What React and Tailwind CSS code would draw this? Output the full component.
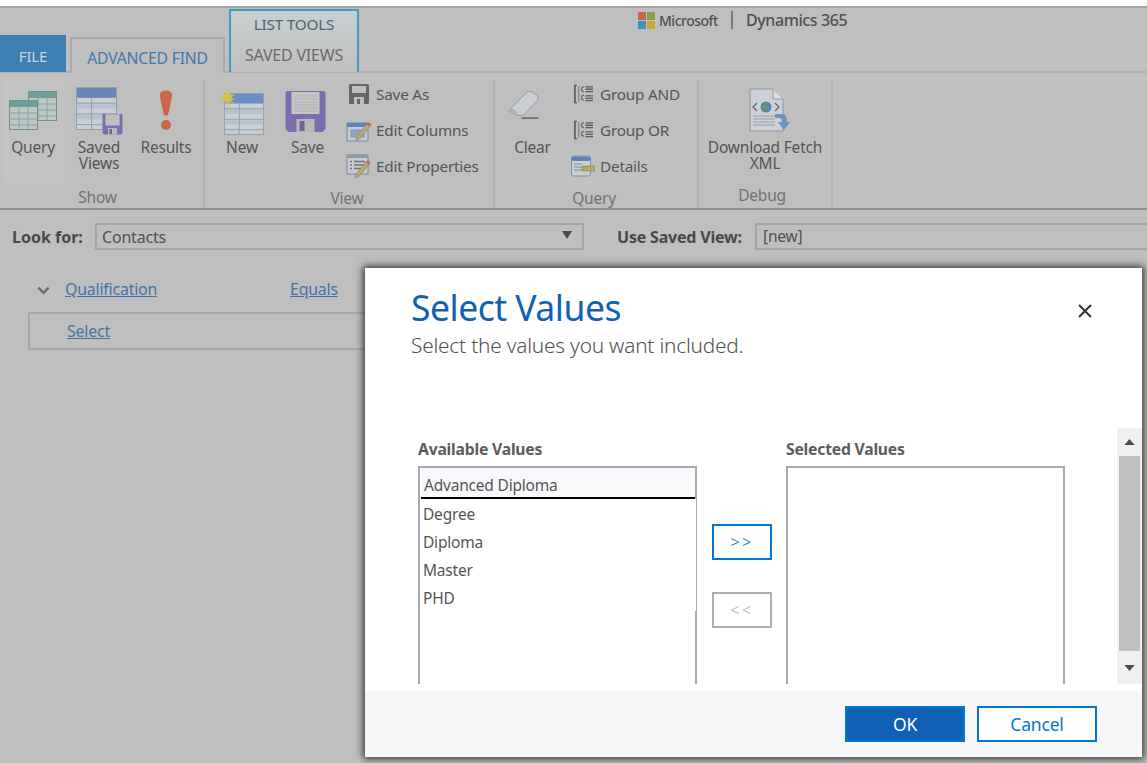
function TableIcon({ head = "#6d8fc4", line = "#8fa0ad", body = "#c9cfd3", className = "" }) {
  return (
    <svg viewBox="0 0 42 44" className={className}>
      <rect x="0.5" y="0.5" width="41" height="43" fill={body} stroke={line} />
      <rect x="1" y="1" width="40" height="10" fill={head} />
      <rect x="1" y="17" width="40" height="5" fill="#b8c2ca" />
      <rect x="1" y="28" width="40" height="5" fill="#b8c2ca" />
      <path d="M16 11v32M1 16.5h40M1 27.5h40M1 38.5h40" stroke={line} strokeWidth="1" fill="none" />
    </svg>
  );
}

function QueryIcon() {
  const grid = (x, y) => (
    <g key={x}>
      <rect x={x + 0.5} y={y + 0.5} width="28" height="29" fill="#bfc7c5" stroke="#71908f" />
      <rect x={x + 1} y={y + 1} width="27" height="6" fill="#6f9d9b" />
      <path d={`M${x + 10} ${y + 7}v22M${x + 19} ${y + 7}v22M${x} ${y + 13}h28M${x} ${y + 19}h28M${x} ${y + 25}h28`} stroke="#86a3a2" fill="none" />
    </g>
  );
  return (
    <svg viewBox="0 0 48 40" className="w-[48px] h-[40px]">
      {grid(19, 0)}
      {grid(0, 9)}
    </svg>
  );
}

function Floppy({ className = "" }) {
  return (
    <svg viewBox="0 0 40 42" className={className}>
      <path d="M0 2a2 2 0 0 1 2-2h36a2 2 0 0 1 2 2v36l-3 3H3l-3-3z" fill="#7c6eae" />
      <rect x="6" y="1" width="28" height="22" fill="#c6c6c6" />
      <path d="M8 5h24M8 8h24M8 11h24M8 14h24M8 17h24M8 20h24" stroke="#b0b0b0" />
      <rect x="11" y="28" width="18" height="13" fill="#b9b9b9" />
      <rect x="14" y="30" width="5" height="10" fill="#6f6398" />
    </svg>
  );
}

function SavedViewsIcon() {
  return (
    <div className="relative w-[48px] h-[48px]">
      <TableIcon className="w-[43px] h-[43px]" head="#6785ba" />
      <Floppy className="absolute right-0 bottom-0 w-[21px] h-[21px]" />
    </div>
  );
}

function ResultsIcon() {
  return (
    <svg viewBox="0 0 16 42" className="w-[16px] h-[42px]">
      <path d="M2 4.5C2 2 5 0.5 8 0.5s6 1.5 6 4c0 5-3 15-4 21H6C5 19.5 2 9.5 2 4.5z" fill="#c9694a" />
      <ellipse cx="8" cy="35" rx="5" ry="5" fill="#c9694a" />
    </svg>
  );
}

function NewIcon() {
  return (
    <div className="relative w-[46px] h-[46px] mt-[2px]">
      <TableIcon className="absolute right-0 bottom-0 w-[42px] h-[42px]" />
      <svg viewBox="0 0 18 18" className="absolute left-0 top-0 w-[17px] h-[17px]">
        <path d="M9 0l1.4 5L14 1.5 12 6l5-.5-4 3.500 5 2-5 .5 3 4-4.500-2.500L11 18l-2.500-4.500L6 17l.5-5L1 14l4-3.500L0 8l5.500-.5L3 3l4 2.500z" fill="#d6c05a" />
      </svg>
    </div>
  );
}

function SaveAsIcon() {
  return (
    <svg viewBox="0 0 22 22" className="w-[22px] h-[22px]">
      <path d="M1 2.500A1.500 1.500 0 0 1 2.500 1h17A1.500 1.500 0 0 1 21 2.500v17a1.500 1.500 0 0 1-1.500 1.500h-17A1.500 1.500 0 0 1 1 19.500z" fill="#666" />
      <rect x="4" y="3" width="14" height="7" fill="#bfbfbf" />
      <rect x="6" y="14" width="10" height="7" fill="#bfbfbf" />
      <rect x="9" y="16" width="3" height="5" fill="#666" />
    </svg>
  );
}

function Pencil() {
  return (
    <g>
      <path d="M11 17l10-12 3 2.500-10 12-4 1.500z" fill="#bfa66b" stroke="#8b7c58" strokeWidth="0.6" />
      <path d="M21 5l1.500-2 3 2.500-1.500 2z" fill="#c1694f" />
    </g>
  );
}

function EditColumnsIcon() {
  return (
    <svg viewBox="0 0 26 23" className="w-[26px] h-[23px]">
      <rect x="1" y="4" width="21" height="18" fill="#c3cad4" stroke="#7d8a99" />
      <rect x="1" y="4" width="21" height="4" fill="#5c82bd" />
      <rect x="5" y="11" width="13" height="7" fill="#8ea6c4" stroke="#6f86a3" strokeWidth="0.6" />
      <Pencil />
    </svg>
  );
}

function EditPropertiesIcon() {
  return (
    <svg viewBox="0 0 26 24" className="w-[26px] h-[24px]">
      <rect x="1" y="1" width="21" height="19" fill="#c8ccd1" stroke="#7f8893" />
      <rect x="1" y="1" width="21" height="3" fill="#8f9aa8" />
      <path d="M4 7.500h2M8 7.500h11M4 11h2M8 11h11M4 14.500h2M8 14.500h8" stroke="#6b7480" strokeWidth="1.300" />
      <g transform="translate(-1 3)"><Pencil /></g>
    </svg>
  );
}

function EraserIcon() {
  return (
    <svg viewBox="0 0 34 30" className="w-[33px] h-[28px] mb-[13px] mr-[19px]">
      <path d="M1 21L20 2c2-2 5-2 7-.5l4 3c2 2 2 4.500 0 6.500L17 26H9z" fill="#c9ced3" stroke="#8d98a2" strokeWidth="1" />
      <path d="M1 21l8 5 2-3-7-5z" fill="#aab4bd" />
      <path d="M15 29h18" stroke="#5b5b5b" strokeWidth="1.500" />
    </svg>
  );
}

function GroupIcon() {
  return (
    <svg viewBox="0 0 22 20" className="w-[21px] h-[20px]">
      <path d="M4 1H2v18h2" fill="none" stroke="#5d6873" strokeWidth="2" />
      <path d="M6 2v16" stroke="#7d8e9e" strokeWidth="1.500" />
      <path d="M11.500 2.500c-2-.3-2.500 1-2.500 2.500s.5 2.500 2.500 2.500M11.500 11.500c-2-.3-2.500 1-2.500 2.500s.5 2.500 2.500 2.500" fill="none" stroke="#5d6873" strokeWidth="1.300" />
      <path d="M13 2.500h8M13 5h8M13 7.500h8M13 12h8M13 14.500h8M13 17h8" stroke="#5a5a5a" strokeWidth="1.400" />
    </svg>
  );
}

function DetailsIcon() {
  return (
    <svg viewBox="0 0 24 22" className="w-[24px] h-[22px]">
      <rect x="0.500" y="1" width="19" height="20" rx="2" fill="#c9d0d8" stroke="#7f8fa3" />
      <rect x="1" y="1.500" width="18" height="4.500" rx="1.500" fill="#5f81b8" />
      <path d="M3 9h8M3 12h8M3 15h8" stroke="#7d8ea3" />
      <rect x="11" y="11" width="13" height="5" fill="#b8a65e" stroke="#8c8350" strokeWidth="0.600" />
    </svg>
  );
}

function XmlIcon() {
  return (
    <svg viewBox="0 0 42 46" className="w-[42px] h-[46px] ml-[9px]">
      <path d="M1 1h23l10 10v32H1z" fill="#cdd1d6" stroke="#8a96a5" />
      <path d="M24 1v10h10" fill="#dcdfe2" stroke="#8a96a5" />
      <circle cx="17" cy="19" r="5.500" fill="#4f86b5" />
      <path d="M14 17c2-2 3 0 4 1s2 3 0 4-3-1-4-2z" fill="#6f9a4a" />
      <path d="M8 15l-4 4 4 4M26 15l4 4-4 4" fill="none" stroke="#5e6670" strokeWidth="1.300" />
      <path d="M4 28h22M4 31h22M4 34h22M4 37h22" stroke="#8c9bad" />
      <path d="M26 26h6c5 0 6 3 6 8h3l-6 8-6-8h4c0-3-1-4-4-4h-3z" fill="#6f92c6" />
    </svg>
  );
}

function LargeBtn({ icon, label, className = "" }) {
  return (
    <div className={`flex flex-col items-center pt-[7px] ${className}`}>
      <div className="flex items-center justify-center h-[48px]">{icon}</div>
      <div className="mt-[4px] text-center text-[15.500px] leading-[16px] text-[#555555]">{label}</div>
    </div>
  );
}

function SmallBtn({ icon, label, className = "" }) {
  return (
    <div className={`flex items-center h-[36px] ${className}`}>
      <div className="flex w-[26px] justify-center">{icon}</div>
      <span className="ml-[4px] text-[15.300px] text-[#555555]">{label}</span>
    </div>
  );
}

function Group({ width, label, labelPad = "pr-[4px]", children }) {
  return (
    <div className={`flex flex-col shrink-0 border-r-2 border-[#b3b3b3] ${width}`}>
      <div className="flex h-[109px]">{children}</div>
      <div className={`flex-1 pt-[1px] text-center text-[15.500px] leading-[26px] text-[#727272] ${labelPad}`}>{label}</div>
    </div>
  );
}

function Listbox({ children }) {
  return (
    <div className="w-[279px] h-[218px] border-2 border-b-0 border-[#a6aab3] bg-white">{children}</div>
  );
}

function Chevron() {
  return (
    <svg viewBox="0 0 14 9" className="w-[13px] h-[9px]">
      <path d="M1.500 1.500L7 7l5.500-5.500" fill="none" stroke="#6a6a6a" strokeWidth="2.600" />
    </svg>
  );
}

export default function App() {
  return (
    <div className="relative w-[1147px] h-[763px] overflow-hidden bg-white font-['Noto_Sans',sans-serif] tracking-[-0.2px]">
      <div className="h-[6px] bg-white" />
      <div className="h-[757px] bg-[#bfbfbf] border-t-2 border-[#a6a6a6]">
        {/* tab bar */}
        <div className="relative flex items-end h-[65px] border-b-2 border-[#adadad]">
          <div className="w-[66px] h-[37px] mb-[-1px] pt-[5px] bg-[#3d7fb0] flex items-center justify-center text-[15px] text-[#c4d6e4]">FILE</div>
          <div className="ml-[4px] w-[155px] h-[36px] mb-[-2px] pt-[5px] bg-[#bfbfbf] border-2 border-b-0 border-[#a9a9a9] flex items-center justify-center text-[15.700px] text-[#3f78ab]">ADVANCED FIND</div>
          <div className="ml-[4px] w-[130px] h-[63px] mb-[-1px] border-2 border-b-0 border-[#419cc4] bg-gradient-to-b from-[#c9d0d2] to-[#bfbfbf] flex flex-col items-center">
            <div className="h-[26px] leading-[26px] text-[15.300px] text-[#4f6474]">LIST TOOLS</div>
            <div className="h-[34px] leading-[36px] text-[16px] text-[#6a6a6a]">SAVED VIEWS</div>
          </div>
          <div className="absolute left-[638px] top-0 flex items-center">
            <div className="grid grid-cols-2 gap-[1px] w-[17px] h-[17px]">
              <div className="bg-[#c0694f]" />
              <div className="bg-[#8aa03f]" />
              <div className="bg-[#3f93bd]" />
              <div className="bg-[#c9a63e]" />
            </div>
            <span className="ml-[4px] text-[14px] font-medium tracking-[-0.5px] text-[#505050]">Microsoft</span>
            <div className="ml-[13px] w-[2px] h-[18px] bg-[#7b7b7b]" />
            <span className="ml-[13px] text-[16px] font-medium tracking-[-0.4px] text-[#505050]">Dynamics 365</span>
          </div>
        </div>

        {/* ribbon */}
        <div className="flex h-[137px] pt-[7px] border-b-2 border-[#8f8f8f]">
          <Group width="w-[205px]" label="Show" labelPad="pr-[8px]">
            <LargeBtn className="w-[62px] ml-[2px] bg-[#c2c2c2] h-[103px]" icon={<QueryIcon />} label="Query" />
            <LargeBtn className="w-[70px]" icon={<SavedViewsIcon />} label={<>Saved<br />Views</>} />
            <LargeBtn className="w-[64px]" icon={<ResultsIcon />} label="Results" />
          </Group>
          <Group width="w-[290px]" label="View">
            <LargeBtn className="w-[74px]" icon={<NewIcon />} label="New" />
            <LargeBtn className="w-[57px]" icon={<Floppy className="w-[41px] h-[42px] mt-[2px] mr-[4px]" />} label="Save" />
            <div className="flex flex-col ml-[10px] -mt-[4px]">
              <SmallBtn icon={<SaveAsIcon />} label="Save As" />
              <SmallBtn icon={<EditColumnsIcon />} label="Edit Columns" />
              <SmallBtn icon={<EditPropertiesIcon />} label="Edit Properties" />
            </div>
          </Group>
          <Group width="w-[204px]" label="Query">
            <LargeBtn className="w-[75px]" icon={<EraserIcon />} label="Clear" />
            <div className="flex flex-col -mt-[4px]">
              <SmallBtn icon={<GroupIcon />} label="Group AND" />
              <SmallBtn icon={<GroupIcon />} label="Group OR" />
              <SmallBtn className="w-[89px] -ml-[3px] pl-[3px] bg-[#c1c1c1]" icon={<DetailsIcon />} label="Details" />
            </div>
          </Group>
          <Group width="w-[134px]" label="Debug" labelPad="pr-[6px]">
            <LargeBtn className="w-[132px]" icon={<XmlIcon />} label={<>Download Fetch<br />XML</>} />
          </Group>
        </div>

        {/* look for */}
        <div className="flex items-center h-[27px] mt-[13px] pl-[12px]">
          <span className="w-[83px] pt-[1px] text-[16px] tracking-normal font-bold text-[#484848]">Look for:</span>
          <div className="flex items-center justify-between w-[489px] h-[27px] border-2 border-[#a5a5a5] pl-[5px] pr-[10px]">
            <span className="pt-[1px] text-[16px] text-[#4f4f4f]">Contacts</span>
            <svg viewBox="0 0 10 8" className="w-[10px] h-[8px] -mt-[4px]"><path d="M0 0h10L5 8z" fill="#4a4a4a" /></svg>
          </div>
          <span className="ml-[33px] w-[138px] pt-[1px] shrink-0 text-[16px] font-bold text-[#484848]">Use Saved View:</span>
          <div className="flex items-center flex-1 h-[27px] border-2 border-r-0 border-[#a5a5a5] pl-[6px]">
            <span className="pt-[1px] text-[15.500px] text-[#4f4f4f]">[new]</span>
          </div>
        </div>

        {/* condition */}
        <div className="flex items-center h-[24px] mt-[28px] pl-[37px]">
          <Chevron />
          <a className="ml-[15px] w-[225px] text-[15.900px] underline text-[#4273a8]">Qualification</a>
          <a className="text-[15.900px] underline text-[#4273a8]">Equals</a>
        </div>
        <div className="flex items-center w-[400px] h-[38px] ml-[28px] mt-[10px] pt-[1px] border-2 border-[#a7a7ad] pl-[37px]">
          <a className="text-[15.900px] underline text-[#4273a8]">Select</a>
        </div>
      </div>

      {/* modal */}
      <div className="absolute left-[365px] top-[268px] w-[777px] h-[489px] flex flex-col bg-white shadow-[0_0_7px_2px_rgba(30,30,30,0.85)]">
        <div className="relative h-[160px] pl-[46px] pt-[14px]">
          <div className="text-[35.500px] leading-[50px] tracking-[-0.5px] text-[#1160b7]">Select Values</div>
          <div className="text-[20.800px] font-light leading-[26px] text-[#505050]">Select the values you want included.</div>
          <svg viewBox="0 0 14 14" className="absolute left-[713px] top-[36px] w-[14px] h-[14px]">
            <path d="M1 1l12 12M13 1L1 13" stroke="#333" strokeWidth="2" />
          </svg>
        </div>
        <div className="flex h-[256px]">
          <div className="flex flex-col w-[752px] pl-[53px] pt-[10px]">
            <div className="flex h-[28px] text-[15.700px] font-bold text-[#5c5c5c]">
              <span className="w-[368px]">Available Values</span>
              <span>Selected Values</span>
            </div>
            <div className="flex">
              <div className="relative">
                <Listbox>
                  <div className="h-[31px] ml-[1px] pl-[3px] bg-[#f8f9fb] border-b-2 border-black text-[15.500px] leading-[34px] text-[#555555]">Advanced Diploma</div>
                  <div className="pt-[1px] pl-[3px]">
                    {["Degree", "Diploma", "Master", "PHD"].map((v) => (
                      <div key={v} className="h-[28px] text-[15.500px] leading-[28px] text-[#555555]">{v}</div>
                    ))}
                  </div>
                </Listbox>
                <div className="absolute right-[1px] top-[33px] w-[1px] h-[112px] bg-white" />
              </div>
              <div className="flex flex-col w-[89px] pl-[15px] pt-[58px] gap-[32px]">
                <button className="w-[60px] h-[36px] border-2 border-[#0078d4] text-[16px] font-light tracking-[2.500px] text-[#0078d4]">&gt;&gt;</button>
                <button className="w-[60px] h-[36px] border-2 border-[#adadad] text-[16px] font-light tracking-[2.500px] text-[#b5b5b5]">&lt;&lt;</button>
              </div>
              <Listbox />
            </div>
          </div>
          <div className="flex flex-col items-center w-[25px] bg-[#f0f0f0]">
            <div className="flex items-center justify-center h-[28px]">
              <svg viewBox="0 0 12 7" className="w-[11px] h-[6px]"><path d="M6 0l6 7H0z" fill="#4d4d4d" /></svg>
            </div>
            <div className="w-[21px] h-[196px] bg-[#c0c0c0]" />
            <div className="flex items-center justify-center h-[33px]">
              <svg viewBox="0 0 12 7" className="w-[11px] h-[6px]"><path d="M0 0h12L6 7z" fill="#4d4d4d" /></svg>
            </div>
          </div>
        </div>
        <div className="flex justify-end flex-1 mt-[7px] bg-[#f7f7f7] pt-[15px] pr-[45px] gap-[12px]">
          <button className="w-[120px] h-[36px] bg-[#1160b7] border-2 border-[#0078d4] text-[17.500px] text-white">OK</button>
          <button className="w-[120px] h-[36px] bg-white border-2 border-[#0078d4] text-[17.500px] text-[#0078d4]">Cancel</button>
        </div>
      </div>
    </div>
  );
}
